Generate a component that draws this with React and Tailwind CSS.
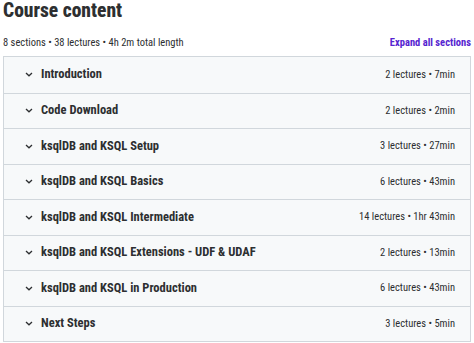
import React from "react";

const sections = [
  ["Introduction", "2 lectures • 7min"],
  ["Code Download", "2 lectures • 2min"],
  ["ksqlDB and KSQL Setup", "3 lectures • 27min"],
  ["ksqlDB and KSQL Basics", "6 lectures • 43min"],
  ["ksqlDB and KSQL Intermediate", "14 lectures • 1hr 43min"],
  ["ksqlDB and KSQL Extensions - UDF & UDAF", "2 lectures • 13min"],
  ["ksqlDB and KSQL in Production", "6 lectures • 43min"],
  ["Next Steps", "3 lectures • 5min"],
];

function Chevron() {
  return (
    <svg width="8" height="5" viewBox="0 0 8 5" fill="none">
      <path d="M1 1l3 2.8L7 1" stroke="#2d2f31" strokeWidth="1.3" />
    </svg>
  );
}

export default function App() {
  return (
    <div className="w-[474px] h-[343px] bg-white overflow-hidden text-[#2d2f31] font-['Roboto_Condensed',sans-serif]">
      <h2 className="pl-[3px] text-[19.5px] leading-[22px] font-extrabold">Course content</h2>
      <div className="flex items-center justify-between pl-[3px] pr-[3px] mt-[12px] h-[18px]">
        <span className="text-[10.5px]">8 sections • 38 lectures • 4h 2m total length</span>
        <span className="text-[10.5px] font-bold text-[#5624d0]">Expand all sections</span>
      </div>
      <div className="ml-[3px] mt-[4px] w-[468px] border border-[#d1d7dc]">
        {sections.map(([t, m], i) => (
          <div key={i} className={`flex items-center h-[35.5px] bg-[#f7f9fa] pl-[21px] pr-[15px] ${i > 0 ? "border-t border-[#d1d7dc]" : ""}`}>
            <Chevron />
            <span className="ml-[8px] text-[12.5px] font-bold">{t}</span>
            <span className="ml-auto text-[10.5px]">{m}</span>
          </div>
        ))}
      </div>
    </div>
  );
}
